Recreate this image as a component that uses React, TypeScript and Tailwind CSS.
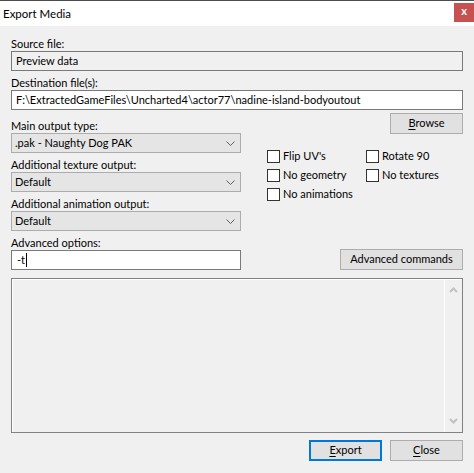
import React from 'react';

const font = { fontFamily: '"Segoe UI", Lato, "Noto Sans", sans-serif' };

function Chevron() {
  return (
    <svg width="9" height="5" viewBox="0 0 9 5" className="shrink-0">
      <path d="M0.5 0.5 L4.5 4.5 L8.5 0.5" fill="none" stroke="#606060" strokeWidth="1" />
    </svg>
  );
}

function Select({ value }: { value: string }) {
  return (
    <div className="flex h-[20px] items-center justify-between border border-[#acacac] bg-[#e5e5e5] pl-[3px] pr-[5px]">
      <span>{value}</span>
      <Chevron />
    </div>
  );
}

function Label({ children }: { children: React.ReactNode }) {
  return <div className="mt-[5px] h-[14px] leading-[14px]">{children}</div>;
}

function Check({ label }: { label: string }) {
  return (
    <div className="flex h-[19px] items-center gap-[3px]">
      <div className="h-[13px] w-[13px] border border-[#333] bg-white" />
      <span>{label}</span>
    </div>
  );
}

function Button({ children, primary }: { children: React.ReactNode; primary?: boolean }) {
  return (
    <button
      className={
        primary
          ? 'flex h-[21px] w-[73px] items-center justify-center border-2 border-[#0078d7] bg-[#e1e1e1]'
          : 'flex h-[21px] w-[73px] items-center justify-center border border-[#adadad] bg-[#e1e1e1]'
      }
    >
      {children}
    </button>
  );
}

export default function App() {
  return (
    <div className="h-[473px] w-[474px] overflow-hidden bg-[#f0f0f0] text-[11px] text-black" style={font}>
      {/* title bar */}
      <div className="h-[1px] bg-[#4d4d4d]" />
      <div className="flex h-[25px] items-start justify-between bg-white">
        <span className="pl-[3px] pt-[5px] text-[11.5px] leading-[15px]">Export Media</span>
        <div className="mt-[2px] flex h-[19px] w-[20px] items-center justify-center bg-[#c75050] pb-[2px] text-[11px] font-bold text-white">
          x
        </div>
      </div>

      <div className="flex flex-col px-[11px]">
        <div className="mt-[11px] h-[14px] leading-[14px]">Source file:</div>
        <div className="flex h-[20px] items-center border border-[#7a7a7a] bg-[#f0f0f0] pl-[4px]">Preview data</div>
        <Label>Destination file(s):</Label>
        <div className="flex h-[20px] items-center border border-[#7a7a7a] bg-white pl-[4px]">
          F:\ExtractedGameFiles\Uncharted4\actor77\nadine-island-bodyoutout
        </div>

        <div className="flex">
          <div className="flex w-[230px] flex-col">
            <div className="mt-[9px] h-[14px] leading-[14px]">Main output type:</div>
            <Select value=".pak - Naughty Dog PAK" />
            <Label>Additional texture output:</Label>
            <Select value="Default" />
            <Label>Additional animation output:</Label>
            <Select value="Default" />
            <Label>Advanced options:</Label>
            <div className="flex h-[20px] items-center border border-[#7a7a7a] bg-white pl-[5px]">
              <span>-t</span>
              <span className="ml-[1px] h-[14px] w-[1px] bg-black" />
            </div>
          </div>

          <div className="flex flex-1 flex-col items-end">
            <div className="mt-[3px]">
              <Button>
                <span className="underline underline-offset-2">B</span>rowse
              </Button>
            </div>
            <div className="mt-[13px] grid w-full grid-cols-[99px_1fr] pl-[26px]">
              <Check label="Flip UV's" />
              <Check label="Rotate 90" />
              <Check label="No geometry" />
              <Check label="No textures" />
              <Check label="No animations" />
            </div>
            <button className="mt-auto flex h-[21px] w-[123px] items-center justify-center whitespace-nowrap border border-[#adadad] bg-[#e1e1e1]">
              Advanced commands
            </button>
          </div>
        </div>

        {/* log box */}
        <div className="mt-[8px] flex h-[155px] border border-[#828282] bg-[#f0f0f0] shadow-[inset_1px_1px_0_#ffffff]">
          <div className="flex-1" />
          <div className="flex w-[18px] flex-col items-center justify-between border-l border-white py-[8px]">
            <svg width="9" height="6" viewBox="0 0 9 6">
              <path d="M1 5 L4.5 1.5 L8 5" fill="none" stroke="#c2c2c2" strokeWidth="2" />
            </svg>
            <svg width="9" height="6" viewBox="0 0 9 6">
              <path d="M1 1 L4.5 4.5 L8 1" fill="none" stroke="#c2c2c2" strokeWidth="2" />
            </svg>
          </div>
        </div>

        <div className="mt-[7px] flex justify-end gap-[8px]">
          <Button primary>
            <span>
              <span className="underline underline-offset-2">E</span>xport
            </span>
          </Button>
          <Button>
            <span>
              <span className="underline underline-offset-2">C</span>lose
            </span>
          </Button>
        </div>
      </div>
    </div>
  );
}
